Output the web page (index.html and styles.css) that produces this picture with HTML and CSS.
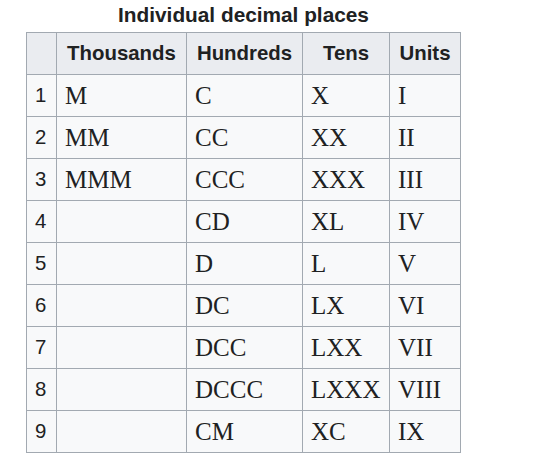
FILE: index.html
```html
<!DOCTYPE html>
<html>
<head>
<meta charset="utf-8">
<link rel="stylesheet" href="styles.css">
</head>
<body>
<div class="page">
<table class="wikitable">
<caption>Individual decimal places</caption>
<colgroup>
<col class="c-num"><col class="c-th"><col class="c-hu"><col class="c-te"><col class="c-un">
</colgroup>
<thead>
<tr><th></th><th>Thousands</th><th>Hundreds</th><th>Tens</th><th>Units</th></tr>
</thead>
<tbody>
<tr><td class="n">1</td><td class="r">M</td><td class="r">C</td><td class="r">X</td><td class="r">I</td></tr>
<tr><td class="n">2</td><td class="r">MM</td><td class="r">CC</td><td class="r">XX</td><td class="r">II</td></tr>
<tr><td class="n">3</td><td class="r">MMM</td><td class="r">CCC</td><td class="r">XXX</td><td class="r">III</td></tr>
<tr><td class="n">4</td><td class="r"></td><td class="r">CD</td><td class="r">XL</td><td class="r">IV</td></tr>
<tr><td class="n">5</td><td class="r"></td><td class="r">D</td><td class="r">L</td><td class="r">V</td></tr>
<tr><td class="n">6</td><td class="r"></td><td class="r">DC</td><td class="r">LX</td><td class="r">VI</td></tr>
<tr><td class="n">7</td><td class="r"></td><td class="r">DCC</td><td class="r">LXX</td><td class="r">VII</td></tr>
<tr><td class="n">8</td><td class="r"></td><td class="r">DCCC</td><td class="r">LXXX</td><td class="r">VIII</td></tr>
<tr><td class="n">9</td><td class="r"></td><td class="r">CM</td><td class="r">XC</td><td class="r">IX</td></tr>
</tbody>
</table>
</div>
</body>
</html>
```
FILE: styles.css
```css
html, body {
  margin: 0;
  padding: 0;
  background: #ffffff;
}
body {
  font-family: "Liberation Sans", Arial, sans-serif;
  color: #202122;
}
.page {
  padding: 3px 0 0 26px;
}
.wikitable {
  border-collapse: collapse;
  table-layout: fixed;
  width: 435px;
  background: #f8f9fa;
  border: 1px solid #a2a9b1;
  font-size: 20.4px;
}
.wikitable caption {
  font-weight: bold;
  font-size: 20.8px;
  line-height: 23px;
  padding-bottom: 6px;
  text-align: center;
}
.c-num { width: 30px; }
.c-th { width: 130px; }
.c-hu { width: 116px; }
.c-te { width: 87px; }
.c-un { width: 71px; }
.wikitable th,
.wikitable td {
  border: 1px solid #a2a9b1;
  padding: 0 8px;
  height: 42px;
  box-sizing: border-box;
  vertical-align: middle;
  white-space: nowrap;
}
.wikitable th {
  background: #eaecf0;
  font-weight: bold;
  text-align: center;
}
.wikitable td {
  text-align: left;
}
.wikitable td.r {
  font-family: "Liberation Serif", "Times New Roman", serif;
  font-size: 25px;
}
```
